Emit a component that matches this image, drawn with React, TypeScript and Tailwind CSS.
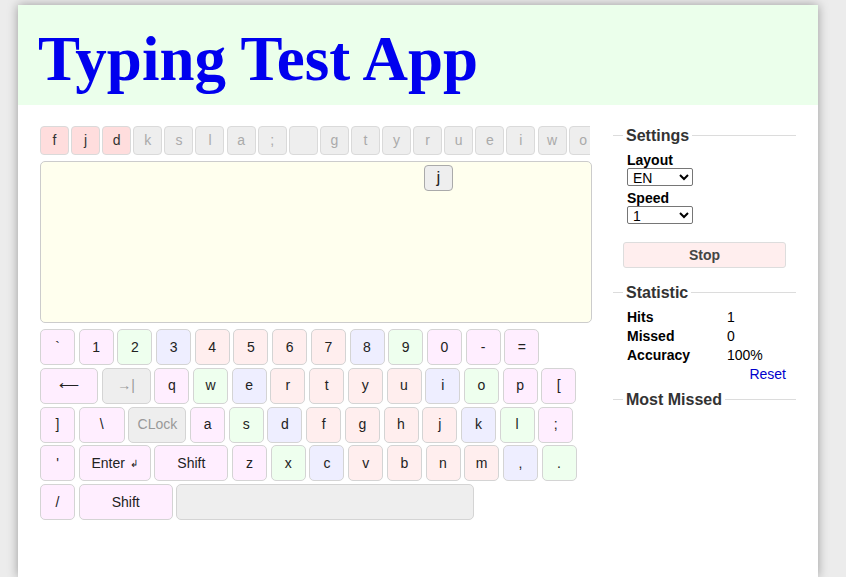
import React from "react"

type Tone = "l" | "g" | "b" | "p" | "x"

type KeyDef = {
  label: string
  tone: Tone
  w?: string
}

const toneClass: Record<Tone, string> = {
  l: "bg-[#ffeeff] text-[#222]",
  g: "bg-[#eeffee] text-[#222]",
  b: "bg-[#eeeeff] text-[#222]",
  p: "bg-[#ffeeee] text-[#222]",
  x: "bg-[#eeeeee] text-[#999]",
}

const rows: KeyDef[][] = [
  [
    { label: "`", tone: "l" },
    { label: "1", tone: "l" },
    { label: "2", tone: "g" },
    { label: "3", tone: "b" },
    { label: "4", tone: "p" },
    { label: "5", tone: "p" },
    { label: "6", tone: "p" },
    { label: "7", tone: "p" },
    { label: "8", tone: "b" },
    { label: "9", tone: "g" },
    { label: "0", tone: "l" },
    { label: "-", tone: "l" },
    { label: "=", tone: "l" },
  ],
  [
    { label: "⟵", tone: "l", w: "w-[58px]" },
    { label: "→|", tone: "x", w: "w-[49px]" },
    { label: "q", tone: "l" },
    { label: "w", tone: "g" },
    { label: "e", tone: "b" },
    { label: "r", tone: "p" },
    { label: "t", tone: "p" },
    { label: "y", tone: "p" },
    { label: "u", tone: "p" },
    { label: "i", tone: "b" },
    { label: "o", tone: "g" },
    { label: "p", tone: "l" },
    { label: "[", tone: "l" },
  ],
  [
    { label: "]", tone: "l" },
    { label: "\\", tone: "l", w: "w-[46px]" },
    { label: "CLock", tone: "x", w: "w-[58px]" },
    { label: "a", tone: "l" },
    { label: "s", tone: "g" },
    { label: "d", tone: "b" },
    { label: "f", tone: "p" },
    { label: "g", tone: "p" },
    { label: "h", tone: "p" },
    { label: "j", tone: "p" },
    { label: "k", tone: "b" },
    { label: "l", tone: "g" },
    { label: ";", tone: "l" },
  ],
  [
    { label: "'", tone: "l" },
    { label: "Enter", tone: "l", w: "w-[72px]" },
    { label: "Shift", tone: "l", w: "w-[74px]" },
    { label: "z", tone: "l" },
    { label: "x", tone: "g" },
    { label: "c", tone: "b" },
    { label: "v", tone: "p" },
    { label: "b", tone: "p" },
    { label: "n", tone: "p" },
    { label: "m", tone: "p" },
    { label: ",", tone: "b" },
    { label: ".", tone: "g" },
  ],
  [
    { label: "/", tone: "l" },
    { label: "Shift", tone: "l", w: "w-[94px]" },
    { label: "", tone: "x", w: "w-[298px]" },
  ],
]

// letters queued for the current lesson; the first three are already drilled
const strip = ["f", "j", "d", "k", "s", "l", "a", ";", "", "g", "t", "y", "r", "u", "e", "i", "w", "o", "p"]

function Key({ k }: { k: KeyDef }) {
  return (
    <div
      className={`${k.w ?? "w-[35px]"} ${toneClass[k.tone]} h-[36px] shrink-0 flex items-center justify-center rounded-[5px] border border-[#d4d4d4] text-[14px]`}
    >
      {k.label}
      {k.label === "Enter" && <span className="ml-[5px] text-[10px]">↲</span>}
    </div>
  )
}

function Legend({ title }: { title: string }) {
  return (
    <div className="flex items-center h-[19px]">
      <div className="w-[10px] h-px bg-[#dcdcdc]" />
      <span className="px-[3px] text-[16px] font-bold text-[#333]">{title}</span>
      <div className="flex-1 h-px bg-[#dcdcdc]" />
    </div>
  )
}

export default function App() {
  return (
    <div className="min-h-screen bg-[#ececec] pt-[5px] pl-[18px] font-['Liberation_Sans',Arial,sans-serif]">
      <div className="w-[800px] min-h-[572px] bg-white shadow-[0_0_10px_rgba(0,0,0,0.35)]">
        <header className="h-[100px] bg-[#ebffeb] flex items-center pl-[20px] pt-[8px]">
          <h1 className="font-['Liberation_Serif','Times_New_Roman',serif] font-bold text-[63px] leading-[72px] text-[#0000ee]">
            Typing Test App
          </h1>
        </header>

        <main className="flex pl-[22px] pt-[21px]">
          {/* typing area and keyboard */}
          <div className="w-[552px]">
            <div className="w-[550px] overflow-hidden">
              <div className="flex gap-[2.1px]">
                {strip.map((c, i) => (
                  <div
                    key={i}
                    className={`w-[29px] h-[29px] shrink-0 flex items-center justify-center rounded-[4px] border border-[#dadada] text-[14px] ${
                      i < 3 ? "bg-[#ffdddd] text-[#333]" : "bg-[#eeeeee] text-[#aaa]"
                    }`}
                  >
                    {c}
                  </div>
                ))}
              </div>
            </div>

            <div className="relative mt-[6px] h-[162px] rounded-[5px] border border-[#cccccc] bg-[#ffffee]">
              <div className="absolute left-[383px] top-[3px] w-[29px] h-[26px] flex items-center justify-center rounded-[4px] border border-[#aaaaaa] bg-[#eeeeee] text-[17px] text-[#222]">
                j
              </div>
            </div>

            <div className="mt-[6px] flex flex-col gap-[2.75px]">
              {rows.map((row, r) => (
                <div key={r} className="flex gap-[3.7px]">
                  {row.map((k, i) => (
                    <Key key={i} k={k} />
                  ))}
                </div>
              ))}
            </div>
          </div>

          {/* side panel */}
          <aside className="ml-[21px] w-[183px] text-[14px] text-black">
            <Legend title="Settings" />
            <div className="pl-[14px]">
              <div className="mt-[7px] font-bold leading-[16px]">Layout</div>
              <select className="w-[66px] h-[18px] border border-[#767676] rounded-[2px] bg-white text-[14px] leading-[16px] pl-[1px]">
                <option>EN</option>
              </select>
              <div className="mt-[1px] font-bold leading-[16px]">Speed</div>
              <select className="w-[66px] h-[18px] border border-[#767676] rounded-[2px] bg-white text-[14px] leading-[16px] pl-[1px]">
                <option>1</option>
              </select>
            </div>
            <div className="px-[10px] mt-[15px]">
              <button className="w-full h-[26px] rounded-[3px] border border-[#dddddd] bg-[#ffeeee] font-bold text-[#444]">
                Stop
              </button>
            </div>

            <div className="mt-[15px]">
              <Legend title="Statistic" />
            </div>
            <div className="mt-[6px] pl-[14px] pr-[10px]">
              <div className="grid grid-cols-[100px_1fr] leading-[19px]">
                <span className="font-bold">Hits</span>
                <span>1</span>
                <span className="font-bold">Missed</span>
                <span>0</span>
                <span className="font-bold">Accuracy</span>
                <span>100%</span>
              </div>
              <div className="text-right leading-[19px]">
                <a className="text-[#0000cc]">Reset</a>
              </div>
            </div>

            <div className="mt-[6px]">
              <Legend title="Most Missed" />
            </div>
          </aside>
        </main>
      </div>
    </div>
  )
}
